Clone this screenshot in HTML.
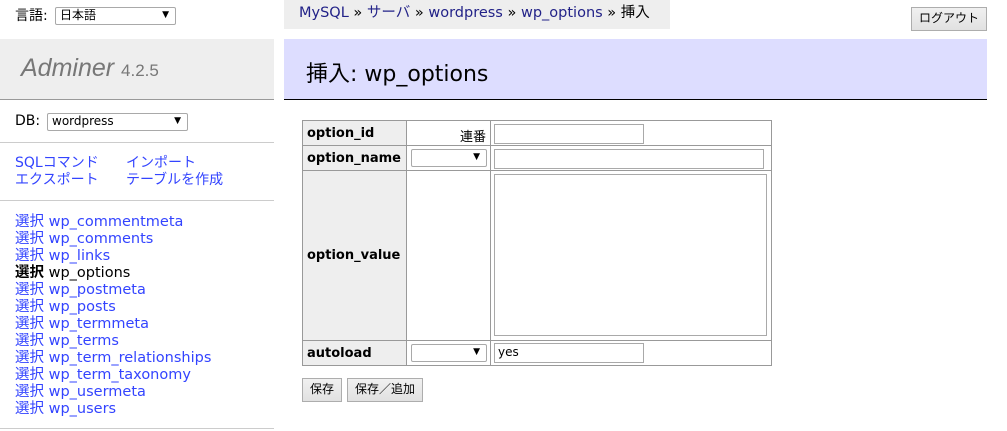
<!DOCTYPE html>
<html><head><meta charset="utf-8"><style>
*{margin:0;padding:0;box-sizing:border-box}
body{width:1007px;height:431px;overflow:hidden;background:#fff;position:relative;font-family:"DejaVu Sans","Noto Sans CJK JP",sans-serif;font-size:13px;color:#000}
.a{position:absolute}
a{color:#34f;text-decoration:none}
.sel{position:absolute;border:1px solid #a9a9a9;background:#fff;font-size:12px;padding-left:4px;line-height:15px;border-radius:2px}
.sel:after{content:"▼";position:absolute;right:6px;top:0;font-size:9px}
.inp{position:absolute;border:1px solid #a9a9a9;background:#fff;font-size:12px;padding-left:3px;line-height:17px}
.btn{position:absolute;border:1px solid #adadad;background:linear-gradient(#f0f0f0,#e1e1e1);font-size:12px;text-align:center;line-height:21px}
.hr{position:absolute;left:0;width:274px;height:1px;background:#ccc}
.side a{display:block;line-height:17px}
</style></head><body>
<div class="a" style="left:15px;top:7px;line-height:18px;font-size:14px">言語:</div>
<div class="sel" style="left:55px;top:7px;width:121px;height:18px">日本語</div>
<div class="a" style="left:284px;top:0;width:386px;height:29px;background:#eee;padding-left:15px;line-height:26px;font-size:14.5px"><a style="color:#228">MySQL</a> » <a style="color:#228">サーバ</a> » <a style="color:#228">wordpress</a> » <a style="color:#228">wp_options</a> » 挿入</div>
<div class="btn" style="left:911px;top:7px;width:76px;height:24px">ログアウト</div>
<div class="a" style="left:0;top:39px;width:274px;height:61px;background:#eee;border-bottom:1px solid #999"><span class="a" style="left:21px;top:15px;font-size:25px;font-style:italic;color:#777;font-family:'Liberation Sans',sans-serif;white-space:nowrap">Adminer <span style="font-size:17px;font-style:normal">4.2.5</span></span></div>
<div class="a" style="left:284px;top:39px;width:703px;height:61px;background:#ddf;border-bottom:1px solid #000"><span class="a" style="left:22px;top:17px;font-size:22px">挿入: wp_options</span></div>
<div class="a" style="left:15px;top:113px;line-height:17px;font-size:14px">DB:</div>
<div class="sel" style="left:47px;top:113px;width:141px;height:18px">wordpress</div>
<div class="hr" style="top:142px"></div>
<div class="a side" style="left:15px;top:155px;font-size:14px"><a>SQLコマンド</a><a>エクスポート</a></div>
<div class="a side" style="left:126px;top:155px;font-size:14px"><a>インポート</a><a>テーブルを作成</a></div>
<div class="hr" style="top:200px"></div>
<div class="a side" style="left:15px;top:214px;font-size:14.5px;white-space:nowrap">
<a>選択 wp_commentmeta</a><a>選択 wp_comments</a><a>選択 wp_links</a><a style="color:#000"><b>選択</b> wp_options</a><a>選択 wp_postmeta</a><a>選択 wp_posts</a><a>選択 wp_termmeta</a><a>選択 wp_terms</a><a>選択 wp_term_relationships</a><a>選択 wp_term_taxonomy</a><a>選択 wp_usermeta</a><a>選択 wp_users</a></div>
<div class="hr" style="top:428px"></div>
<div class="a" style="left:302px;top:120px;width:470px;height:246px;border:1px solid #999">
 <div class="a" style="left:0;top:0;width:104px;height:244px;background:#eee;border-right:1px solid #999"></div>
 <div class="a" style="left:187px;top:0;width:1px;height:244px;background:#999"></div>
 <div class="a" style="left:0;top:24px;width:468px;height:1px;background:#999"></div>
 <div class="a" style="left:0;top:49px;width:468px;height:1px;background:#999"></div>
 <div class="a" style="left:0;top:219px;width:468px;height:1px;background:#999"></div>
 <b class="a" style="left:4px;top:5px">option_id</b>
 <b class="a" style="left:4px;top:30px">option_name</b>
 <b class="a" style="left:4px;top:127px">option_value</b>
 <b class="a" style="left:4px;top:225px">autoload</b>
 <span class="a" style="left:157px;top:5px">連番</span>
 <div class="sel" style="left:108px;top:28px;width:76px;height:18px"></div>
 <div class="sel" style="left:108px;top:223px;width:76px;height:18px"></div>
 <div class="inp" style="left:191px;top:3px;width:150px;height:20px"></div>
 <div class="inp" style="left:191px;top:28px;width:270px;height:20px"></div>
 <div class="inp" style="left:191px;top:53px;width:273px;height:162px"></div>
 <div class="inp" style="left:191px;top:222px;width:150px;height:20px">yes</div>
</div>
<div class="btn" style="left:302px;top:378px;width:40px;height:24px">保存</div>
<div class="btn" style="left:347px;top:378px;width:76px;height:24px">保存／追加</div>
</body></html>
